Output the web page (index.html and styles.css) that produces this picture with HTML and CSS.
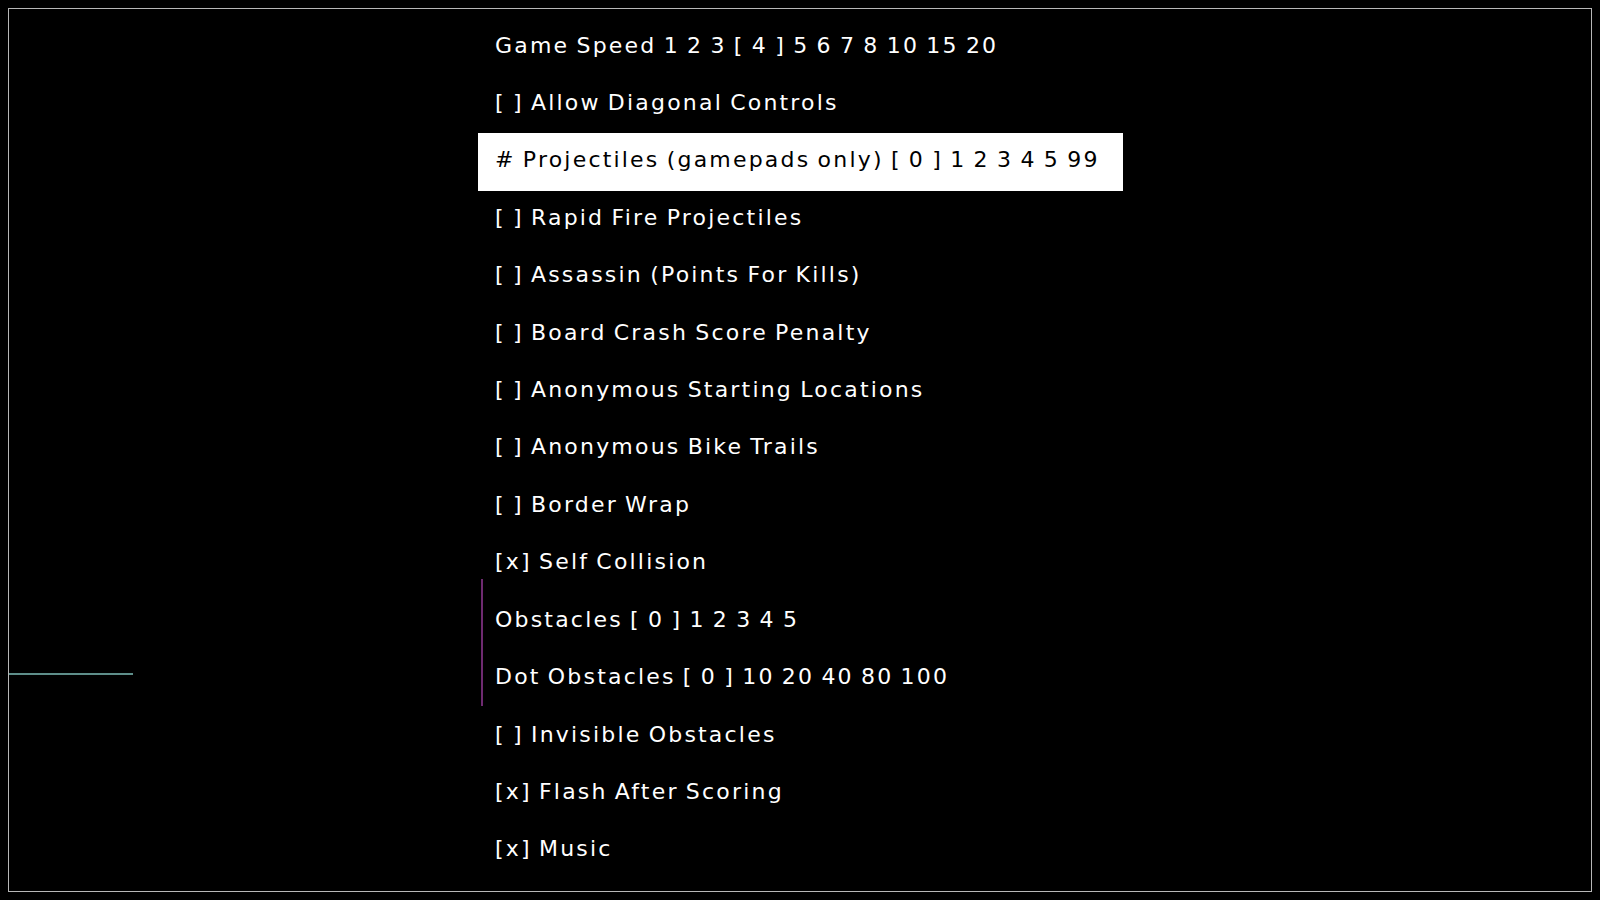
FILE: index.html
```html
<!DOCTYPE html>
<html>
<head>
<meta charset="utf-8">
<link rel="stylesheet" href="styles.css">
<title>Options</title>
</head>
<body>
<div class="frame">
  <div class="trail trail-teal"></div>
  <div class="trail trail-purple"></div>
  <ul class="menu">
    <li class="item">Game Speed 1 2 3 [ 4 ] 5 6 7 8 10 15 20</li>
    <li class="item">[ ] Allow Diagonal Controls</li>
    <li class="item selected"># Projectiles (gamepads only) [ 0 ] 1 2 3 4 5 99</li>
    <li class="item">[ ] Rapid Fire Projectiles</li>
    <li class="item">[ ] Assassin (Points For Kills)</li>
    <li class="item">[ ] Board Crash Score Penalty</li>
    <li class="item">[ ] Anonymous Starting Locations</li>
    <li class="item">[ ] Anonymous Bike Trails</li>
    <li class="item">[ ] Border Wrap</li>
    <li class="item">[x] Self Collision</li>
    <li class="item">Obstacles [ 0 ] 1 2 3 4 5</li>
    <li class="item">Dot Obstacles [ 0 ] 10 20 40 80 100</li>
    <li class="item">[ ] Invisible Obstacles</li>
    <li class="item">[x] Flash After Scoring</li>
    <li class="item">[x] Music</li>
    <li class="item">[x] Sound</li>
  </ul>
</div>
</body>
</html>
```
FILE: styles.css
```css
html, body {
  background: #000;
}
body {
  margin: 8px;
  color: #fff;
  font-family: "DejaVu Sans", "Liberation Sans", sans-serif;
}
.frame {
  position: relative;
  box-sizing: border-box;
  height: 884px;
  border: 1px solid #b8b8b8;
}
.menu {
  list-style: none;
  margin: 0 auto;
  padding: 9.5px 0 0 0;
  width: 645px;
}
.item {
  box-sizing: border-box;
  height: 57.43px;
  line-height: 53.5px;
  padding: 0 17.5px;
  font-size: 22px;
  font-weight: 400;
  letter-spacing: 2.2px;
  word-spacing: -2px;
  white-space: nowrap;
}
.selected {
  background: #fff;
  color: #000;
}
.trail {
  position: absolute;
}
.trail-teal {
  left: 0;
  top: 664px;
  width: 124px;
  height: 2px;
  background: #5e8e8a;
}
.trail-purple {
  left: 472px;
  top: 570px;
  width: 2px;
  height: 127px;
  background: #6e2a70;
}
```
